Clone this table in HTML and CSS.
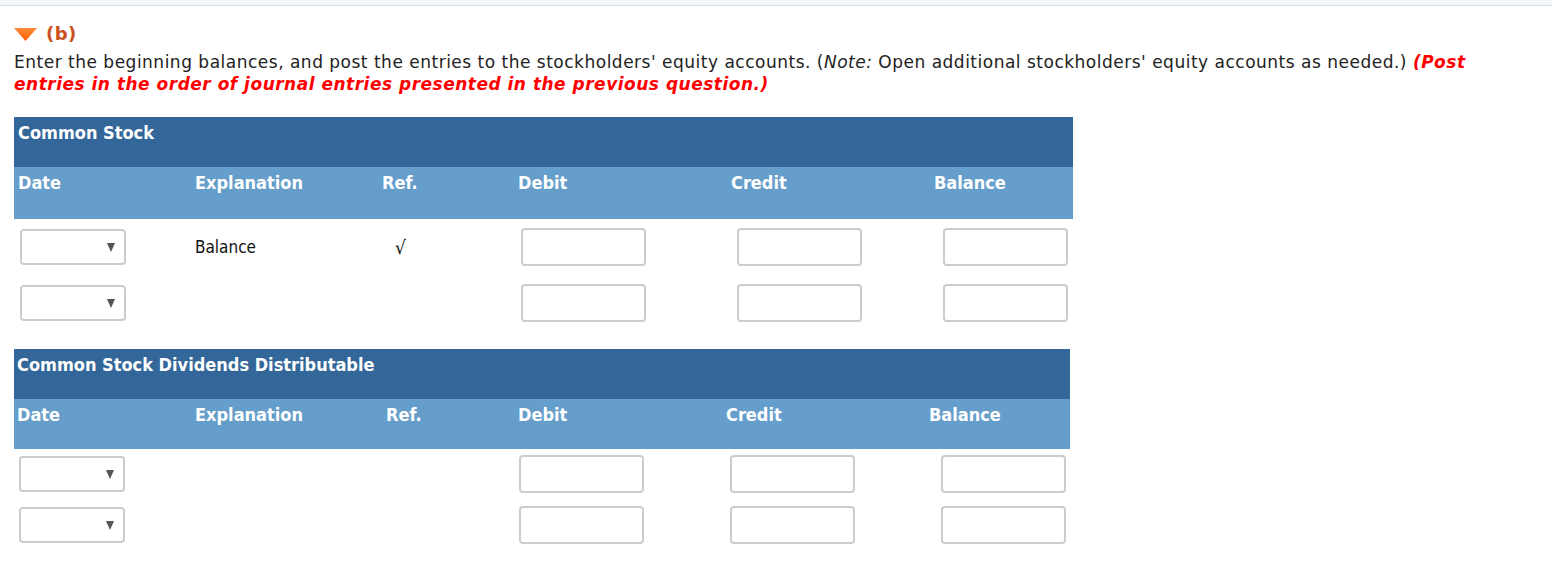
FILE: index.html
```html
<!DOCTYPE html>
<html lang="en">
<head>
<meta charset="utf-8">
<title>Part (b)</title>
<link rel="stylesheet" href="styles.css">
</head>
<body>
<div class="topbar"></div>
<section class="part">
  <div class="part-head">
    <svg class="part-caret" width="23" height="13" viewBox="0 0 23 13" aria-hidden="true">
      <defs>
        <linearGradient id="cg" x1="0" y1="0" x2="0" y2="1">
          <stop offset="0" stop-color="#ff8c3a"/>
          <stop offset="1" stop-color="#ff5a00"/>
        </linearGradient>
      </defs>
      <polygon points="0,0 23,0 11.5,13" fill="url(#cg)"/>
    </svg>
    <span class="part-label">(b)</span>
  </div>
  <p class="instructions">Enter the beginning balances, and post the entries to the stockholders' equity accounts. (<i>Note:</i> Open additional stockholders' equity accounts as needed.) <b class="emph">(Post entries in the order of journal entries presented in the previous question.)</b></p>

  <div class="ledger ledger-a">
    <div class="ledger-title">Common Stock</div>
    <div class="ledger-cols">
      <div class="th">Date</div>
      <div class="th">Explanation</div>
      <div class="th">Ref.</div>
      <div class="th">Debit</div>
      <div class="th">Credit</div>
      <div class="th">Balance</div>
    </div>
    <div class="ledger-row row-opening">
      <div class="td c-date"><span class="select"><span class="arrow"></span></span></div>
      <div class="td c-expl">Balance</div>
      <div class="td c-ref">√</div>
      <div class="td c-debit"><span class="field"></span></div>
      <div class="td c-credit"><span class="field"></span></div>
      <div class="td c-bal"><span class="field"></span></div>
    </div>
    <div class="ledger-row">
      <div class="td c-date"><span class="select"><span class="arrow"></span></span></div>
      <div class="td c-expl"></div>
      <div class="td c-ref"></div>
      <div class="td c-debit"><span class="field"></span></div>
      <div class="td c-credit"><span class="field"></span></div>
      <div class="td c-bal"><span class="field"></span></div>
    </div>
  </div>

  <div class="ledger ledger-b">
    <div class="ledger-title">Common Stock Dividends Distributable</div>
    <div class="ledger-cols">
      <div class="th">Date</div>
      <div class="th">Explanation</div>
      <div class="th">Ref.</div>
      <div class="th">Debit</div>
      <div class="th">Credit</div>
      <div class="th">Balance</div>
    </div>
    <div class="ledger-row">
      <div class="td c-date"><span class="select"><span class="arrow"></span></span></div>
      <div class="td c-expl"></div>
      <div class="td c-ref"></div>
      <div class="td c-debit"><span class="field"></span></div>
      <div class="td c-credit"><span class="field"></span></div>
      <div class="td c-bal"><span class="field"></span></div>
    </div>
    <div class="ledger-row">
      <div class="td c-date"><span class="select"><span class="arrow"></span></span></div>
      <div class="td c-expl"></div>
      <div class="td c-ref"></div>
      <div class="td c-debit"><span class="field"></span></div>
      <div class="td c-credit"><span class="field"></span></div>
      <div class="td c-bal"><span class="field"></span></div>
    </div>
  </div>
</section>
</body>
</html>
```

FILE: styles.css
```css
html, body {
  margin: 0;
  padding: 0;
  background: #ffffff;
}

body {
  font-family: "DejaVu Sans", Verdana, sans-serif;
  color: #222222;
}

.topbar {
  height: 5px;
  background: #f4f7fa;
  border-bottom: 1px solid #d7dfe7;
}

.part {
  padding: 18px 0 0 14px;
}

.part-head {
  display: flex;
  align-items: center;
  gap: 9px;
  height: 20px;
}

.part-caret {
  display: block;
}

.part-label {
  font-weight: bold;
  font-size: 18px;
  letter-spacing: 0.5px;
  color: #c9501c;
  line-height: 20px;
}

.instructions {
  margin: 7px 0 0 0;
  max-width: 1480px;
  font-size: 17px;
  letter-spacing: 0.5px;
  line-height: 22px;
  color: #222222;
}

.emph {
  color: #ff0000;
  font-style: italic;
}

.ledger {
  margin-top: 22px;
  font-family: "DejaVu Sans Condensed", "DejaVu Sans", sans-serif;
  font-stretch: condensed;
}

.ledger-a {
  width: 1059px;
  --cols: 177px 187px 136px 213px 203px 143px;
  --pad: 4px;
  --head: 52px;
}

.ledger-b {
  width: 1056px;
  margin-top: 18px;
  --cols: 178px 191px 132px 208px 203px 144px;
  --pad: 3px;
  --head: 50px;
}

.ledger-title {
  height: 50px;
  box-sizing: border-box;
  background: #336699;
  color: #ffffff;
  font-weight: bold;
  font-size: 18px;
  line-height: 22px;
  padding: 5px 0 0 var(--pad);
}

.ledger-cols {
  display: grid;
  grid-template-columns: var(--cols);
  height: var(--head);
  background: #669ecb;
}

.th {
  color: #ffffff;
  font-weight: bold;
  font-size: 18px;
  line-height: 22px;
  padding: 5px 0 0 var(--pad);
}

.ledger-row {
  display: grid;
  grid-template-columns: var(--cols);
  align-items: center;
}

.ledger-a .ledger-row {
  padding: 9px 0 9px 0;
}

.ledger-b .ledger-row {
  padding: 6px 0 6px 0;
}

.ledger-b .ledger-row + .ledger-row {
  padding-top: 7px;
}

.td {
  font-size: 17px;
  color: #111111;
  display: flex;
  align-items: center;
  height: 38px;
}

.c-expl {
  padding-left: var(--pad);
}

.c-ref {
  padding-left: 17px;
  font-size: 19px;
}

.select {
  position: relative;
  display: block;
  width: 106px;
  height: 36px;
  box-sizing: border-box;
  border: 2px solid #cccccc;
  border-radius: 4px;
  background: #ffffff;
}

.arrow {
  position: absolute;
  right: 9px;
  top: 12px;
  width: 0;
  height: 0;
  border-left: 4.5px solid transparent;
  border-right: 4.5px solid transparent;
  border-top: 9px solid #555555;
}

.field {
  display: block;
  width: 125px;
  height: 38px;
  box-sizing: border-box;
  border: 2px solid #cccccc;
  border-radius: 4px;
  background: #ffffff;
}

.ledger-a .c-date { padding-left: 6px; }
.ledger-a .c-debit { padding-left: 7px; }
.ledger-a .c-credit { padding-left: 10px; }
.ledger-a .c-bal { padding-left: 13px; }

.ledger-b .c-date { padding-left: 5px; }
.ledger-b .c-debit { padding-left: 4px; }
.ledger-b .c-credit { padding-left: 7px; }
.ledger-b .c-bal { padding-left: 15px; }
```
